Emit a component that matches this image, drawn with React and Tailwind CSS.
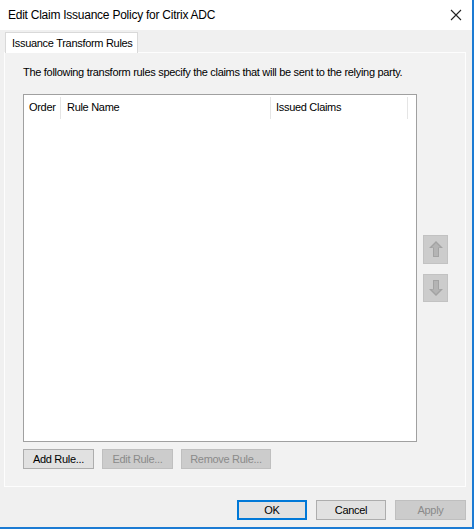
import React from "react";

const font = { fontFamily: '"Liberation Sans", Arial, sans-serif' };

function ArrowIcon({ down }) {
  return (
    <svg width="14" height="16" viewBox="0 0 14 16" className={down ? "rotate-180" : ""}>
      <path d="M7 0 L14 7 L10 7 L10 16 L4 16 L4 7 L0 7 Z" fill="#a3a3a3" />
      <path d="M7 2 L11.5 6.5 L9 6.5 L9 15 L5 15 L5 6.5 L2.5 6.5 Z" fill="#b4b4b4" />
    </svg>
  );
}

function WinButton({ children, disabled, primary, className = "" }) {
  const base = "h-[20px] flex items-center justify-center text-[11px] tracking-[-0.3px] leading-none whitespace-nowrap";
  const look = disabled
    ? "bg-[#cccccc] border border-[#bfbfbf] text-[#8a8a8a]"
    : primary
    ? "bg-[#e1e1e1] border-2 border-[#0078d7] text-black"
    : "bg-[#e1e1e1] border border-[#adadad] text-black";
  return <div className={`${base} ${look} ${className}`}>{children}</div>;
}

export default function App() {
  return (
    <div
      style={font}
      className="w-[474px] h-[529px] bg-[#f0f0f0] flex flex-col border-r-2 border-b-2 border-[#1c7bd3] text-black"
    >
      {/* title bar */}
      <div className="h-[30px] bg-white flex items-center justify-between pl-[8px] pr-[10px] shrink-0">
        <span className="text-[12px] tracking-[-0.25px] whitespace-nowrap">Edit Claim Issuance Policy for Citrix ADC</span>
        <svg width="12" height="12" viewBox="0 0 12 12">
          <path d="M1 1 L11 11 M11 1 L1 11" stroke="#222" strokeWidth="1.1" />
        </svg>
      </div>

      {/* tab strip */}
      <div className="pl-[5px] pt-[2px]">
        <div className="w-[133px] h-[21px] bg-white border border-b-0 border-[#d9d9d9] flex items-center pl-[6px] text-[11px] tracking-[-0.3px] whitespace-nowrap -mb-px relative">
          Issuance Transform Rules
        </div>
      </div>

      {/* tab page */}
      <div className="ml-[4px] w-[462px] h-[435px] border border-[#fdfdfd] bg-[#f2f2f2] flex flex-col pl-[18px] text-[11px] tracking-[-0.3px]">
        <div className="mt-[11px] h-[16px] leading-[16px] whitespace-nowrap">
          The following transform rules specify the claims that will be sent to the relying party.
        </div>

        <div className="mt-[14px] flex items-center gap-[6px]">
          <div className="w-[394px] h-[348px] bg-white border border-[#a0a0a0] flex flex-col">
            <div className="h-[25px] flex items-center">
              <div className="w-[37px] h-[22px] flex items-center pl-[5px] border-r border-[#e5e5e5]">Order</div>
              <div className="w-[210px] h-[22px] flex items-center pl-[6px] border-r border-[#e5e5e5]">Rule Name</div>
              <div className="w-[137px] h-[22px] flex items-center pl-[5px] border-r border-[#e5e5e5]">Issued Claims</div>
            </div>
          </div>

          <div className="flex flex-col gap-[10px]">
            <div className="w-[25px] h-[29px] bg-[#cccccc] border border-[#c2c2c2] flex items-center justify-center">
              <ArrowIcon />
            </div>
            <div className="w-[25px] h-[28px] bg-[#cccccc] border border-[#c2c2c2] flex items-center justify-center">
              <ArrowIcon down />
            </div>
          </div>
        </div>

        <div className="mt-[7px] flex gap-[8px]">
          <WinButton className="w-[71px]">Add Rule...</WinButton>
          <WinButton disabled className="w-[71px]">Edit Rule...</WinButton>
          <WinButton disabled className="w-[90px]">Remove Rule...</WinButton>
        </div>
      </div>

      {/* dialog buttons */}
      <div className="mt-[13px] flex gap-[9px] pl-[237px]">
        <WinButton primary className="w-[70px]">OK</WinButton>
        <WinButton className="w-[70px]">Cancel</WinButton>
        <WinButton disabled className="w-[71px]">Apply</WinButton>
      </div>
    </div>
  );
}
